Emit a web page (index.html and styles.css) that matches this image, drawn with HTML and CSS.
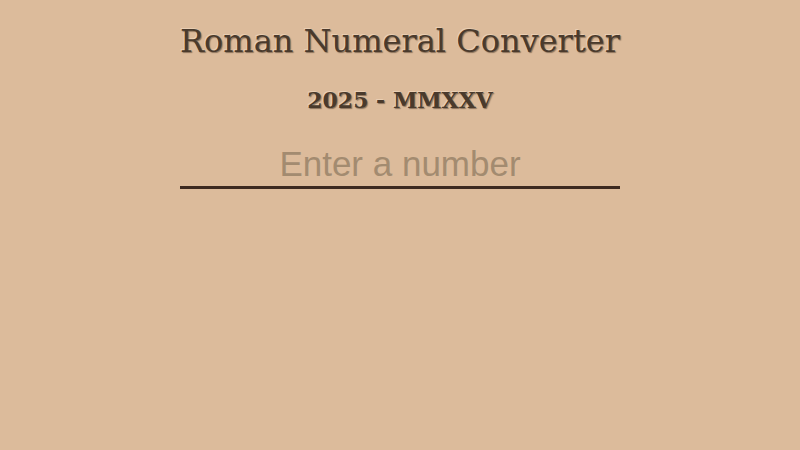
FILE: index.html
```html
<!DOCTYPE html>
<html lang="en">
<head>
    <meta charset="UTF-8">
    <meta name="viewport" content="width=device-width, initial-scale=1.0">
    <title>Roman Numeral Converter</title>
    <link rel="stylesheet" href="styles.css">
</head>
<body>

<div id="converter">
    <h1>Roman Numeral Converter</h1>
    <h2 id="example">2025 - MMXXV</h2>
    <input type="number" id="number-input" placeholder="Enter a number">
    <div id="result"></div>
</div>

</body>
</html>
```

FILE: styles.css
```css
body {
    margin: 0;
    background-color: #dcbb9b;
    font-family: "DejaVu Serif", serif;
    color: #4a3a2c;
}
#converter {
    width: 440px;
    margin: 0 auto;
    display: flex;
    flex-direction: column;
    align-items: center;
}
h1, h2 {
    margin: 0;
    white-space: nowrap;
    text-shadow: 1px 1px 1px rgba(40, 25, 10, 0.45), -1px -1px 0 rgba(255, 240, 220, 0.4);
}
h1 {
    font-size: 32px;
    font-weight: normal;
    margin-top: 22px;
}
h2 {
    font-size: 22px;
    font-weight: bold;
    margin-top: 27px;
}
#number-input {
    width: 100%;
    box-sizing: border-box;
    margin-top: 31px;
    padding: 0 0 2px;
    border: none;
    border-bottom: 3px solid #3d2a20;
    background: transparent;
    font-family: "Liberation Sans", Arial, sans-serif;
    font-size: 35px;
    text-align: center;
    color: #4a3a2c;
    outline: none;
    -moz-appearance: textfield;
}
/* no spin buttons, keeps the text centred */
#number-input::-webkit-outer-spin-button,
#number-input::-webkit-inner-spin-button {
    -webkit-appearance: none;
    margin: 0;
}
#number-input::placeholder {
    color: #a38b70;
}
```
